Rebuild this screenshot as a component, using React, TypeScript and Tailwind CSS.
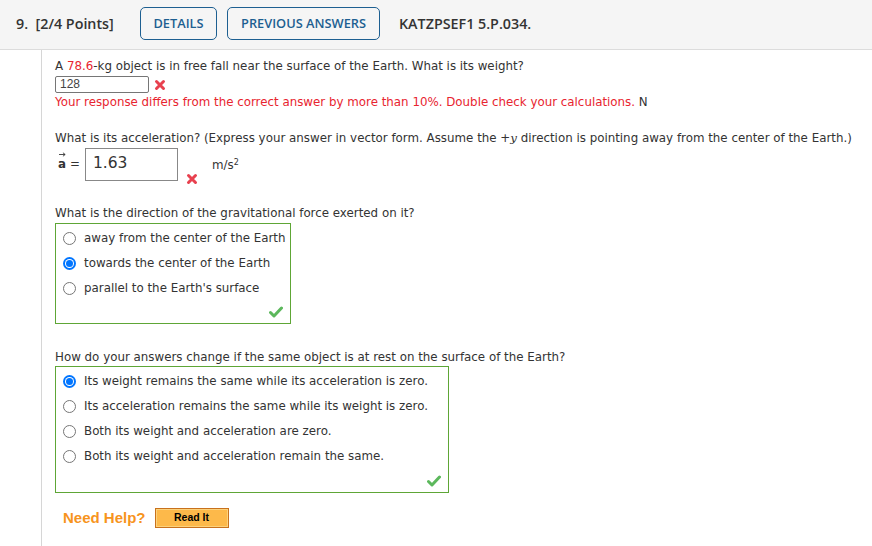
import React from 'react';

const body = { fontFamily: '"DejaVu Sans", Verdana, sans-serif' };

const RedX = ({ className = '' }: { className?: string }) => (
  <svg viewBox="0 0 12 12" className={className}>
    <path d="M2.5 2.5 L9.5 9.5 M9.5 2.5 L2.5 9.5" stroke="#e8414f" strokeWidth="3" strokeLinecap="round" />
  </svg>
);

const Check = () => (
  <svg viewBox="0 0 14 12" className="w-[14px] h-[12px]">
    <path d="M1.5 6.5 L5 10 L12.5 2" fill="none" stroke="#5cb85c" strokeWidth="3" strokeLinecap="round" strokeLinejoin="round" />
  </svg>
);

const Radio = ({ checked }: { checked?: boolean }) =>
  checked ? (
    <span className="w-[13px] h-[13px] rounded-full bg-[#0075ff] flex items-center justify-center shrink-0">
      <span className="w-[9px] h-[9px] rounded-full bg-white flex items-center justify-center">
        <span className="w-[7px] h-[7px] rounded-full bg-[#0075ff]" />
      </span>
    </span>
  ) : (
    <span className="w-[13px] h-[13px] rounded-full border border-[#767676] bg-white shrink-0" />
  );

const Choices = ({ items, picked, width, height }: { items: string[]; picked: number; width: string; height: string }) => (
  <div className={`border border-[#5ea636] ${width} ${height} flex flex-col pt-[2px] px-[7px]`}>
    {items.map((t, i) => (
      <label key={t} className="flex items-center gap-[8px] h-[25px] whitespace-nowrap">
        <Radio checked={i === picked} />
        <span>{t}</span>
      </label>
    ))}
    <div className="mt-auto mb-[5px] flex justify-end">
      <Check />
    </div>
  </div>
);

export default function App() {
  return (
    <div className="w-[872px] h-[546px] bg-white overflow-hidden">
      {/* Header */}
      <div
        className="h-[50px] bg-[#f5f5f5] border-b border-[#dcdcdc] flex items-center pl-[16px] text-[14.3px] font-semibold text-[#333]"
        style={{ fontFamily: '"Open Sans", sans-serif' }}
      >
        <span className="w-[124px] -mt-[1px]">9.&nbsp; [2/4 Points]</span>
        <button className="h-[33px] w-[77px] rounded-[5px] border border-[#1d5f91] text-[#1d5f91] text-[12.8px] font-semibold -mt-[2px]">DETAILS</button>
        <button className="ml-[10px] h-[33px] w-[153px] rounded-[5px] border border-[#1d5f91] text-[#1d5f91] text-[12.8px] font-semibold -mt-[2px]">PREVIOUS ANSWERS</button>
        <span className="ml-[19px] -mt-[1px]">KATZPSEF1 5.P.034.</span>
      </div>

      {/* Body */}
      <div className="ml-[41px] border-l border-[#d6d6d6] h-[496px] pl-[13px] pt-[8px] text-[11.85px] text-[#333]" style={body}>
        <div className="leading-[16px]">
          A <span className="text-[#e8242f]">78.6</span>-kg object is in free fall near the surface of the Earth. What is its weight?
        </div>
        <div className="flex items-center gap-[5px] mt-[2px]">
          <div className="w-[94px] h-[17px] border border-[#767676] rounded-[2px] px-[4px] leading-[15px] text-[#444]" style={{ fontFamily: '"Liberation Sans", Arial, sans-serif', fontSize: 12 }}>128</div>
          <RedX className="w-[12px] h-[12px]" />
        </div>
        <div className="leading-[16px] mt-[1px] text-[#e8242f]">
          Your response differs from the correct answer by more than 10%. Double check your calculations. <span className="text-[#333]">N</span>
        </div>

        <div className="leading-[16px] mt-[20px]">
          What is its acceleration? (Express your answer in vector form. Assume the +<i style={{ fontFamily: '"DejaVu Serif", serif' }}>y</i> direction is pointing away from the center of the Earth.)
        </div>
        <div className="flex items-start mt-[2px]">
          <span className="relative ml-[3px] mt-[8px] font-bold">
            a
            <svg viewBox="0 0 8 5" className="absolute left-[1px] top-[-4px] w-[7px] h-[5px]">
              <path d="M0 2.5 H7 M4.5 0.5 L7 2.5 L4.5 4.5" fill="none" stroke="#333" strokeWidth="1" />
            </svg>
          </span>
          <span className="ml-[4px] mt-[8px]">=</span>
          <div className="ml-[5px] w-[93px] h-[33px] border border-[#888] px-[7px] pt-[4px] text-[15.5px] leading-[20px] text-[#333]" style={{ fontFamily: '"DejaVu Sans", sans-serif' }}>1.63</div>
          <RedX className="w-[12px] h-[12px] ml-[8px] mt-[25px]" />
          <span className="ml-[14px] mt-[9px]">
            m/s<sup className="text-[8px]">2</sup>
          </span>
        </div>

        <div className="leading-[16px] mt-[20px]">What is the direction of the gravitational force exerted on it?</div>
        <div className="mt-[2px]">
          <Choices
            items={['away from the center of the Earth', 'towards the center of the Earth', "parallel to the Earth's surface"]}
            picked={1}
            width="w-[236px]"
            height="h-[101px]"
          />
        </div>

        <div className="leading-[16px] mt-[25px]">How do your answers change if the same object is at rest on the surface of the Earth?</div>
        <div className="mt-[1px]">
          <Choices
            items={[
              'Its weight remains the same while its acceleration is zero.',
              'Its acceleration remains the same while its weight is zero.',
              'Both its weight and acceleration are zero.',
              'Both its weight and acceleration remain the same.',
            ]}
            picked={0}
            width="w-[394px]"
            height="h-[127px]"
          />
        </div>

        <div className="flex items-center mt-[14px] ml-[8px]" style={{ fontFamily: '"Liberation Sans", Arial, sans-serif' }}>
          <span className="text-[15px] font-bold text-[#f7941d]">Need Help?</span>
          <button className="ml-[9px] w-[74px] h-[20px] border border-[#c8711c] bg-[#fdb94a] text-[10.5px] font-bold text-black shadow-[inset_0_0_0_1px_#fcd27c]">
            Read It
          </button>
        </div>
      </div>
    </div>
  );
}
